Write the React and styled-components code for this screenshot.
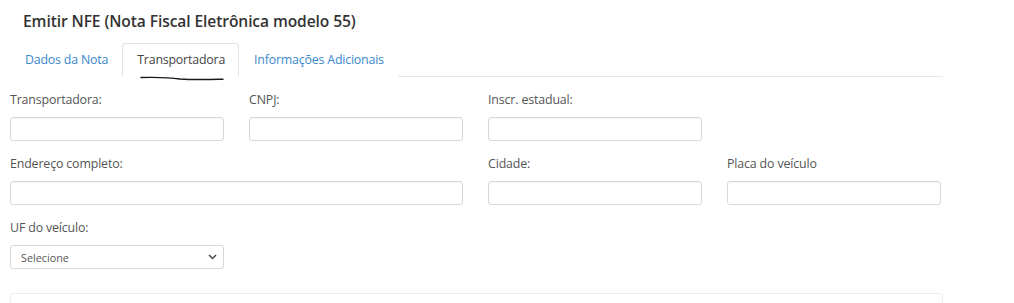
import React from "react";
import styled, { createGlobalStyle } from "styled-components";

const GlobalStyle = createGlobalStyle`
  body {
    margin: 0;
    background: #fff;
    font-family: "Open Sans", "Noto Sans", sans-serif;
  }
`;

const Page = styled.div`
  width: 1014px;
  height: 303px;
  overflow: hidden;
  padding: 0 0 0 10px;
  box-sizing: border-box;
`;

const Title = styled.h3`
  margin: 0;
  padding: 10px 0 0 13px;
  height: 43px;
  box-sizing: border-box;
  font-size: 15.6px;
  font-weight: 600;
  color: #333;
  letter-spacing: -0.1px;
`;

const TabBar = styled.div`
  display: flex;
  width: 933px;
  height: 34px;
  border-bottom: 1px solid #e6e6e6;
  box-sizing: border-box;
`;

const Tab = styled.div`
  position: relative;
  padding: 0 13px 0 14px;
  line-height: 32px;
  font-size: 12.4px;
  color: ${(p) => (p.$active ? "#444" : "#3a88cc")};
  background: #fff;
  border: 1px solid ${(p) => (p.$active ? "#e3e3e3" : "transparent")};
  border-bottom: ${(p) => (p.$active ? "1px solid #fff" : "none")};
  border-radius: 4px 4px 0 0;
  margin-bottom: -1px;
  letter-spacing: -0.2px;
`;

const Scribble = styled.svg`
  position: absolute;
  left: 17px;
  bottom: -6px;
  width: 84px;
  height: 6px;
  overflow: visible;
`;

const Form = styled.div`
  display: grid;
  grid-template-columns: repeat(4, 214px);
  column-gap: 25px;
  row-gap: 15px;
  padding-top: 15px;
`;

const Field = styled.div`
  grid-column: span ${(p) => p.$span || 1};
  display: flex;
  flex-direction: column;
`;

const Label = styled.label`
  font-size: 12.4px;
  color: #555;
  height: 25px;
  line-height: 16px;
  letter-spacing: -0.15px;
`;

const Input = styled.input`
  height: 24px;
  box-sizing: border-box;
  border: 1px solid #d8d8d8;
  border-radius: 3px;
  background: #fff;
  box-shadow: inset 0 1px 1px rgba(0, 0, 0, 0.04);
`;

const SelectBox = styled.div`
  height: 24px;
  box-sizing: border-box;
  border: 1px solid #d8d8d8;
  border-radius: 3px;
  display: flex;
  align-items: center;
  justify-content: space-between;
  padding: 0 6px 0 10px;
  font-size: 10.8px;
  color: #555;
`;

const Panel = styled.div`
  margin-top: 24px;
  width: 931px;
  height: 20px;
  border: 1px solid #eee;
  border-radius: 3px;
`;

const fields = [
  { label: "Transportadora:" },
  { label: "CNPJ:" },
  { label: "Inscr. estadual:" },
  { label: null },
  { label: "Endereço completo:", span: 2 },
  { label: "Cidade:" },
  { label: "Placa do veículo" },
];

export default function App() {
  return (
    <>
      <GlobalStyle />
      <Page>
        <Title>Emitir NFE (Nota Fiscal Eletrônica modelo 55)</Title>
        <TabBar>
          <Tab>Dados da Nota</Tab>
          <Tab $active>
            Transportadora
            <Scribble viewBox="0 0 84 6">
              <path
                d="M1 1.5 C 20 1, 30 1.5, 40 3 C 55 4, 70 3.5, 83 3.2"
                fill="none"
                stroke="#1a1a1a"
                strokeWidth="1.4"
                strokeLinecap="round"
              />
            </Scribble>
          </Tab>
          <Tab>Informações Adicionais</Tab>
        </TabBar>
        <Form>
          {fields.map((f, i) =>
            f.label ? (
              <Field key={i} $span={f.span}>
                <Label>{f.label}</Label>
                <Input />
              </Field>
            ) : (
              <div key={i} />
            )
          )}
          <Field>
            <Label>UF do veículo:</Label>
            <SelectBox>
              <span>Selecione</span>
              <svg width="9" height="6" viewBox="0 0 9 6">
                <path d="M1 1 L4.5 4.5 L8 1" fill="none" stroke="#444" strokeWidth="1.5" />
              </svg>
            </SelectBox>
          </Field>
        </Form>
        <Panel />
      </Page>
    </>
  );
}
